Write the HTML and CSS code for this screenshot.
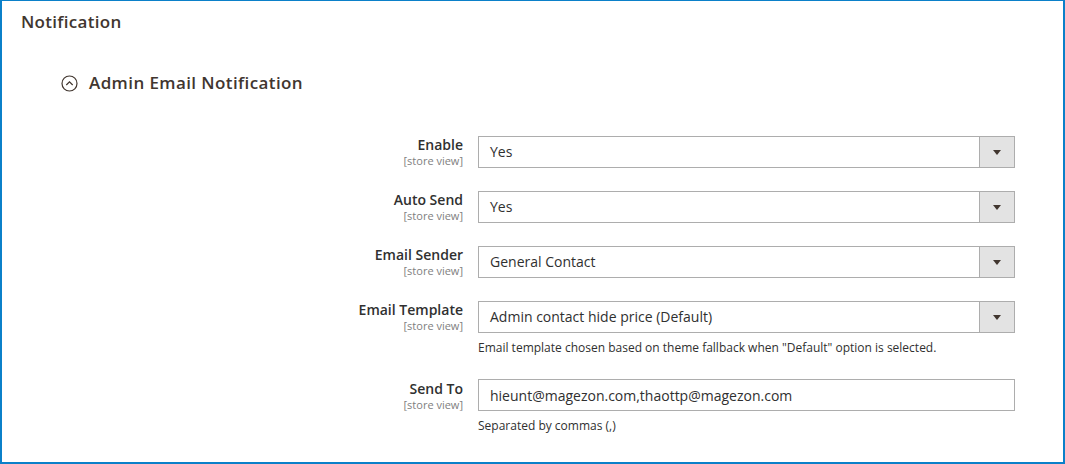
FILE: index.html
```html
<!DOCTYPE html>
<html lang="en">
<head>
  <meta charset="UTF-8">
  <title>Notification</title>
  <link rel="stylesheet" href="styles.css">
</head>
<body>

<div class="panel">
  <h2 class="panel-title">Notification</h2>

  <div class="fieldset-title">
    <svg class="toggle-icon" width="17" height="17" viewBox="0 0 17 17">
      <circle cx="8.5" cy="8.5" r="7.5" fill="none" stroke="#41362f" stroke-width="1.2"/>
      <path d="M5.3 10 L8.5 6.8 L11.7 10" fill="none" stroke="#41362f" stroke-width="1.2"/>
    </svg>
    <span>Admin Email Notification</span>
  </div>

  <div class="form">
    <div class="row">
      <div class="label">Enable<span class="scope">[store view]</span></div>
      <div class="control">
        <div class="select"><span class="select-value">Yes</span><span class="select-btn"><i></i></span></div>
      </div>
    </div>

    <div class="row">
      <div class="label">Auto Send<span class="scope">[store view]</span></div>
      <div class="control">
        <div class="select"><span class="select-value">Yes</span><span class="select-btn"><i></i></span></div>
      </div>
    </div>

    <div class="row">
      <div class="label">Email Sender<span class="scope">[store view]</span></div>
      <div class="control">
        <div class="select"><span class="select-value">General Contact</span><span class="select-btn"><i></i></span></div>
      </div>
    </div>

    <div class="row">
      <div class="label">Email Template<span class="scope">[store view]</span></div>
      <div class="control">
        <div class="select"><span class="select-value">Admin contact hide price (Default)</span><span class="select-btn"><i></i></span></div>
        <p class="note">Email template chosen based on theme fallback when "Default" option is selected.</p>
      </div>
    </div>

    <div class="row">
      <div class="label">Send To<span class="scope">[store view]</span></div>
      <div class="control">
        <input class="text-input" type="text" value="hieunt@magezon.com,thaottp@magezon.com">
        <p class="note">Separated by commas (,)</p>
      </div>
    </div>
  </div>
</div>

</body>
</html>
```

FILE: styles.css
```css
body {
  margin: 0;
  font-family: "Open Sans", "Liberation Sans", sans-serif;
  color: #303030;
  background: #fff;
}
.panel {
  box-sizing: border-box;
  width: 1065px;
  height: 464px;
  padding: 0 19px;
  border: 2px solid #0b80c9;
  border-top-width: 1px;
  overflow: hidden;
}
.panel-title {
  margin: 0;
  padding-top: 9px;
  font-size: 17px;
  font-weight: 600;
  line-height: 24px;
  letter-spacing: 0.3px;
  color: #41362f;
}
.fieldset-title {
  display: flex;
  align-items: center;
  gap: 11px;
  margin: 37px 0 0 40px;
  font-size: 17px;
  font-weight: 600;
  line-height: 24px;
  color: #41362f;
  letter-spacing: 0.4px;
}
.form {
  margin-top: 41px;
}
.row {
  display: grid;
  grid-template-columns: 442px 537px;
  column-gap: 15px;
  margin-bottom: 23px;
}
.row:last-child {
  margin-top: 2px;
}
.row:last-child .label {
  padding-top: 1px;
}
.label {
  text-align: right;
  font-size: 14px;
  font-weight: 600;
  line-height: 18px;
  color: #303030;
}
.scope {
  display: block;
  font-size: 11px;
  font-weight: 400;
  line-height: 13px;
  color: #808080;
}
.select {
  display: flex;
  height: 32px;
  box-sizing: border-box;
  border: 1px solid #adadad;
}
.select-value {
  flex: 1;
  padding-left: 11px;
  font-size: 14px;
  line-height: 30px;
}
.select-btn {
  display: flex;
  align-items: center;
  justify-content: center;
  width: 34px;
  border-left: 1px solid #adadad;
  background: #e3e3e3;
}
.select-btn i {
  width: 0;
  height: 0;
  border-left: 4px solid transparent;
  border-right: 4px solid transparent;
  border-top: 5px solid #41362f;
}
.text-input {
  display: block;
  box-sizing: border-box;
  width: 100%;
  height: 32px;
  margin: 0;
  padding: 0 11px;
  border: 1px solid #adadad;
  font-family: inherit;
  font-size: 14px;
  color: #303030;
}
.note {
  margin: 6px 0 0;
  font-size: 12px;
  line-height: 17px;
  color: #303030;
}
```
